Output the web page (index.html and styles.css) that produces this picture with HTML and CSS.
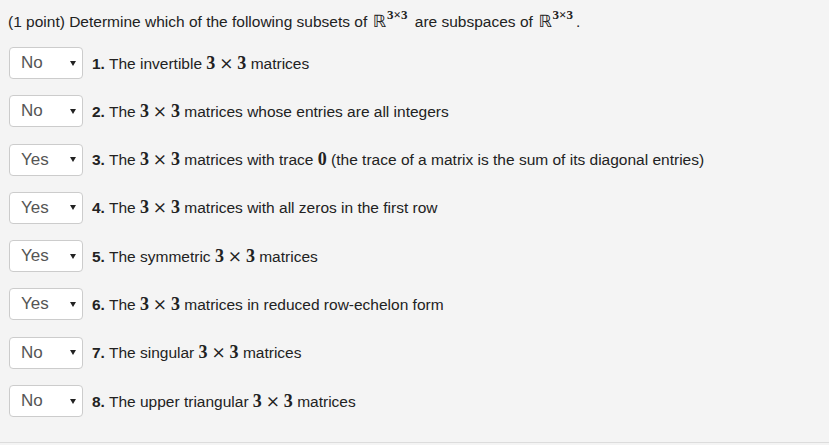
FILE: index.html
```html
<!DOCTYPE html>
<html>
<head>
<meta charset="utf-8">
<link rel="stylesheet" href="styles.css">
</head>
<body>
<div class="page">
  <p class="title">(1 point) Determine which of the following subsets of <span class="m"><span class="bb">ℝ</span><sup class="sup">3×3</sup></span> are subspaces of <span class="m"><span class="bb">ℝ</span><sup class="sup">3×3</sup></span>.</p>
  <div class="rows">
    <div class="row"><div class="sel"><span class="val">No</span><span class="arr"></span></div><div class="lbl"><b>1.</b> The invertible <span class="m"><span class="d">3</span> <span class="x">×</span> <span class="d">3</span></span> matrices</div></div>
    <div class="row"><div class="sel"><span class="val">No</span><span class="arr"></span></div><div class="lbl"><b>2.</b> The <span class="m"><span class="d">3</span> <span class="x">×</span> <span class="d">3</span></span> matrices whose entries are all integers</div></div>
    <div class="row"><div class="sel"><span class="val">Yes</span><span class="arr"></span></div><div class="lbl"><b>3.</b> The <span class="m"><span class="d">3</span> <span class="x">×</span> <span class="d">3</span></span> matrices with trace <span class="m"><span class="d">0</span></span> (the trace of a matrix is the sum of its diagonal entries)</div></div>
    <div class="row"><div class="sel"><span class="val">Yes</span><span class="arr"></span></div><div class="lbl"><b>4.</b> The <span class="m"><span class="d">3</span> <span class="x">×</span> <span class="d">3</span></span> matrices with all zeros in the first row</div></div>
    <div class="row"><div class="sel"><span class="val">Yes</span><span class="arr"></span></div><div class="lbl"><b>5.</b> The symmetric <span class="m"><span class="d">3</span> <span class="x">×</span> <span class="d">3</span></span> matrices</div></div>
    <div class="row"><div class="sel"><span class="val">Yes</span><span class="arr"></span></div><div class="lbl"><b>6.</b> The <span class="m"><span class="d">3</span> <span class="x">×</span> <span class="d">3</span></span> matrices in reduced row-echelon form</div></div>
    <div class="row"><div class="sel"><span class="val">No</span><span class="arr"></span></div><div class="lbl"><b>7.</b> The singular <span class="m"><span class="d">3</span> <span class="x">×</span> <span class="d">3</span></span> matrices</div></div>
    <div class="row"><div class="sel"><span class="val">No</span><span class="arr"></span></div><div class="lbl"><b>8.</b> The upper triangular <span class="m"><span class="d">3</span> <span class="x">×</span> <span class="d">3</span></span> matrices</div></div>
  </div>
</div>
</body>
</html>
```
FILE: styles.css
```css
html, body {
  margin: 0;
  padding: 0;
  background: #f4f4f4;
}
body {
  font-family: "Liberation Sans", Arial, sans-serif;
  color: #222;
  width: 829px;
  height: 445px;
  overflow: hidden;
}
.page {
  height: 443px;
  border-bottom: 1px solid #dcdcdc;
  padding: 0 8px;
  box-sizing: border-box;
}
.title {
  margin: 0;
  padding-top: 11px;
  height: 47px;
  box-sizing: border-box;
  font-size: 15.5px;
  line-height: 20px;
}
.m {
  font-family: "Liberation Serif", "Times New Roman", serif;
}
.bb {
  font-family: "DejaVu Sans", sans-serif;
  font-size: 17px;
  margin-left: 1px;
}
.sup {
  font-size: 13px;
  vertical-align: 8px;
  line-height: 0;
  font-weight: bold;
  margin-left: 1px;
  margin-right: 3px;
}
.rows {
  display: flex;
  flex-direction: column;
  gap: 16.3px;
}
.row {
  display: flex;
  align-items: center;
  height: 32px;
}
.sel {
  width: 74px;
  height: 32px;
  margin-left: 1px;
  box-sizing: border-box;
  background: #fff;
  border: 1px solid #ccc;
  border-radius: 4px;
  display: flex;
  align-items: center;
  padding-left: 11px;
  padding-right: 6px;
}
.val {
  font-size: 17px;
  color: #555;
  flex: 1;
}
.arr {
  width: 0;
  height: 0;
  border-left: 3px solid transparent;
  border-right: 3px solid transparent;
  border-top: 5px solid #222;
}
.lbl {
  margin-left: 9px;
  font-size: 15.5px;
}
.d {
  font-weight: bold;
  font-size: 18px;
}
.x {
  font-size: 17px;
  font-family: "DejaVu Serif", serif;
  font-weight: normal;
}
```
